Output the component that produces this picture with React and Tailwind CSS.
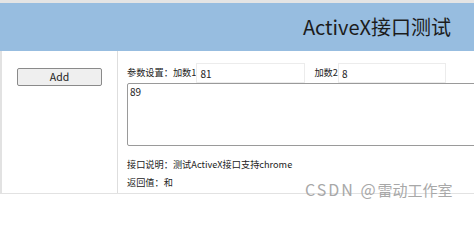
export default function App() {
  const font = { fontFamily: '"Noto Sans CJK SC", "Noto Sans", sans-serif' }

  return (
    <div className="relative w-[474px] h-[206px] overflow-hidden bg-white text-[#222]" style={font}>
      <div className="h-[3px] bg-[#e4e4e4]" />
      <header className="flex h-[48px] items-center justify-end bg-[#97bde0] pr-[23px]">
        <h1 className="text-[20px] leading-none text-[#1c1c1c]">ActiveX接口测试</h1>
      </header>

      <div className="flex h-[143px] border-b border-l-2 border-[#e2e2e2]">
        <aside className="w-[116px] shrink-0 border-r border-[#dedede] pt-[17px] pl-[15px]">
          <button
            type="button"
            className="block h-[18px] w-[85px] rounded-[2px] border border-[#8a8a8a] bg-[#efefef] text-[10.5px] leading-none text-[#222]"
          >
            Add
          </button>
        </aside>

        <main className="flex-1 overflow-hidden pl-[9px] pt-[12px] text-[9.2px]">
          <div className="flex h-[20px] items-center whitespace-nowrap">
            <span>参数设置：加数1</span>
            <input
              readOnly
              value="81"
              className="h-[20px] w-[109px] border border-[#ececec] bg-white px-[3px] text-[10px] outline-none"
            />
            <span className="ml-[9px]">加数2</span>
            <input
              readOnly
              value="8"
              className="h-[20px] w-[108px] border border-[#ececec] bg-white px-[3px] text-[10px] outline-none"
            />
          </div>

          <textarea
            readOnly
            value="89"
            className="block h-[63px] w-[420px] resize-none rounded-[2px] border border-[#9a9a9a] bg-white px-[2px] py-[1px] text-[10px] leading-[14px] outline-none"
          />

          <p className="mt-[9px] leading-[18px]">接口说明：测试ActiveX接口支持chrome</p>
          <p className="leading-[18px]">返回值：和</p>
        </main>
      </div>

      <span className="absolute left-[305px] top-[181px] whitespace-nowrap leading-none text-[#a8a8a8]">
        <span className="text-[16px] tracking-[2px]">CSDN @</span>
        <span className="text-[15px]">雷动工作室</span>
      </span>
    </div>
  )
}
